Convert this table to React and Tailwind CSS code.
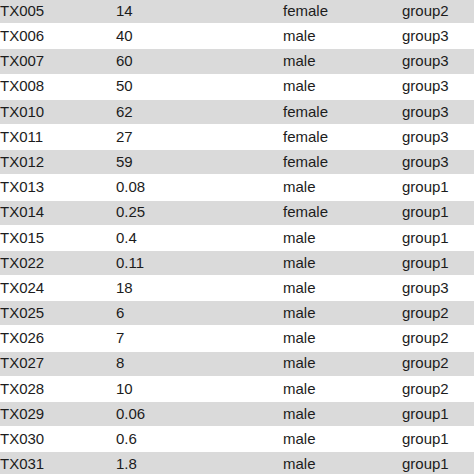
import React from "react";

const rows = [
  ["TX005", "14", "female", "group2"],
  ["TX006", "40", "male", "group3"],
  ["TX007", "60", "male", "group3"],
  ["TX008", "50", "male", "group3"],
  ["TX010", "62", "female", "group3"],
  ["TX011", "27", "female", "group3"],
  ["TX012", "59", "female", "group3"],
  ["TX013", "0.08", "male", "group1"],
  ["TX014", "0.25", "female", "group1"],
  ["TX015", "0.4", "male", "group1"],
  ["TX022", "0.11", "male", "group1"],
  ["TX024", "18", "male", "group3"],
  ["TX025", "6", "male", "group2"],
  ["TX026", "7", "male", "group2"],
  ["TX027", "8", "male", "group2"],
  ["TX028", "10", "male", "group2"],
  ["TX029", "0.06", "male", "group1"],
  ["TX030", "0.6", "male", "group1"],
  ["TX031", "1.8", "male", "group1"],
];

const App = () => {
  return (
    <div className="w-[474px] h-[474px] overflow-hidden bg-white">
      <div className="-mt-[2px] text-[15px] text-[#1c1c1c] font-['Liberation_Sans',Arial,sans-serif]">
        {rows.map((r, i) => (
          <div
            key={r[0]}
            className={
              "grid grid-cols-[116px_167px_119px_1fr] items-center h-[25.2px] border-t border-white " +
              (i % 2 === 0 ? "bg-[#dadada]" : "bg-white")
            }
          >
            <span>{r[0]}</span>
            <span>{r[1]}</span>
            <span>{r[2]}</span>
            <span>{r[3]}</span>
          </div>
        ))}
      </div>
    </div>
  );
};

export default App;
